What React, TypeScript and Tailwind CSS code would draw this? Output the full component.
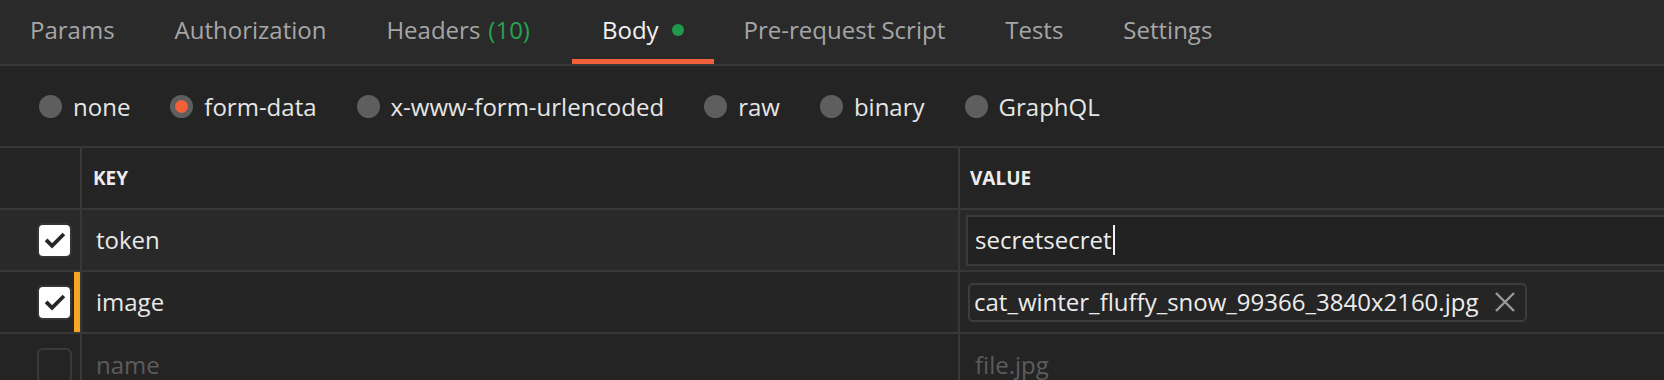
const tabs = [
  { label: "Params" },
  { label: "Authorization" },
  { label: "Headers", count: "(10)" },
  { label: "Body", active: true, dot: true },
  { label: "Pre-request Script" },
  { label: "Tests" },
  { label: "Settings" },
];

const bodyTypes = ["none", "form-data", "x-www-form-urlencoded", "raw", "binary", "GraphQL"];

function Checkbox({ checked }: { checked: boolean }) {
  if (!checked) {
    return <div className="h-[35px] w-[35px] rounded-[6px] border-2 border-[#3a3a3a]" />;
  }
  return (
    <div className="flex h-[35px] w-[35px] items-center justify-center rounded-[6px] border-2 border-[#353535] bg-white">
      <svg viewBox="0 0 24 24" className="h-[28px] w-[28px]" fill="none" stroke="#262626" strokeWidth={3.2} strokeLinecap="square">
        <path d="M5.5 13l4 4L18.5 8" />
      </svg>
    </div>
  );
}

function Radio({ selected }: { selected: boolean }) {
  return (
    <span className="flex h-[23px] w-[23px] items-center justify-center rounded-full bg-[#5e5e5e]">
      {selected && <span className="h-[13px] w-[13px] rounded-full bg-[#f4603a]" />}
    </span>
  );
}

export default function App() {
  return (
    <div className="h-[380px] w-full overflow-hidden bg-[#242424] font-['Open_Sans',sans-serif] text-[24px]">
      {/* tabs */}
      <div className="flex h-[66px] border-b-2 border-[#383838] bg-[#2a2a2a]">
        {tabs.map((t) => (
          <div key={t.label} className={`relative flex h-full items-center px-[30px] pb-[4px] ${t.count ? "mr-[12px]" : ""}`}>
            <span className={t.active ? "text-[#f2f2f2]" : "text-[#a6a6a6]"}>{t.label}</span>
            {t.count && <span className="ml-[8px] text-[#27a152]">{t.count}</span>}
            {t.dot && <span className="ml-[13px] h-[12px] w-[12px] rounded-full bg-[#1f9a4c]" />}
            {t.active && <span className="absolute bottom-0 left-0 right-0 h-[5px] bg-[#f0603b]" />}
          </div>
        ))}
      </div>

      {/* body type */}
      <div className="flex h-[82px] items-center gap-[40px] border-b-2 border-[#383838] pl-[39px] pt-[1px]">
        {bodyTypes.map((b) => (
          <label key={b} className="flex items-center gap-[11px] text-[#e6e6e6]">
            <Radio selected={b === "form-data"} />
            <span>{b}</span>
          </label>
        ))}
      </div>

      {/* table */}
      <div className="w-[1800px]">
        <div className="grid h-[62px] grid-cols-[82px_878px_1fr] border-b-2 border-[#383838]">
          <div className="border-r-2 border-[#383838]" />
          <div className="flex items-center border-r-2 border-[#383838] pl-[11px] text-[19px] font-bold text-[#ececec]">KEY</div>
          <div className="flex items-center pl-[10px] text-[19px] font-bold text-[#ececec]">VALUE</div>
        </div>

        <div className="grid h-[62px] grid-cols-[82px_878px_1fr] border-b-2 border-[#383838] bg-[#292929]">
          <div className="flex items-center justify-end gap-[2px] border-r-2 border-[#383838]">
            <Checkbox checked />
            <span className="w-[6px]" />
          </div>
          <div className="flex items-center border-r-2 border-[#383838] pl-[14px] text-[#e8e8e8]">token</div>
          <div className="flex items-center pl-[6px]">
            <div className="flex h-[51px] w-[760px] items-center border-2 border-[#3a3a3a] bg-[#222222] pl-[7px] text-[#ececec]">
              secretsecret
              <span className="ml-[1px] h-[30px] w-[2px] bg-[#f0f0f0]" />
            </div>
          </div>
        </div>

        <div className="grid h-[62px] grid-cols-[82px_878px_1fr] border-b-2 border-[#383838] bg-[#252525]">
          <div className="flex items-stretch justify-end gap-[2px] border-r-2 border-[#383838]">
            <div className="flex items-center">
              <Checkbox checked />
            </div>
            <span className="w-[6px] bg-[#f5a623]" />
          </div>
          <div className="flex items-center border-r-2 border-[#383838] pl-[14px] text-[#e8e8e8]">image</div>
          <div className="flex items-center pl-[8px]">
            <div className="flex h-[39px] items-center rounded-[5px] border-2 border-[#3d3d3d] pl-[4px] pr-[9px] text-[#ececec]">
              <span>cat_winter_fluffy_snow_99366_3840x2160.jpg</span>
              <svg viewBox="0 0 22 22" className="ml-[16px] h-[22px] w-[22px]" fill="none" stroke="#9a9a9a" strokeWidth={2.4}>
                <path d="M2 2L20 20M20 2L2 20" />
              </svg>
            </div>
          </div>
        </div>

        <div className="grid h-[62px] grid-cols-[82px_878px_1fr]">
          <div className="flex items-center justify-end gap-[2px] border-r-2 border-[#383838]">
            <Checkbox checked={false} />
            <span className="w-[6px]" />
          </div>
          <div className="flex items-center border-r-2 border-[#383838] pl-[14px] text-[#5c5c5c]">name</div>
          <div className="flex items-center pl-[15px] text-[#5c5c5c]">file.jpg</div>
        </div>
      </div>
    </div>
  );
}
